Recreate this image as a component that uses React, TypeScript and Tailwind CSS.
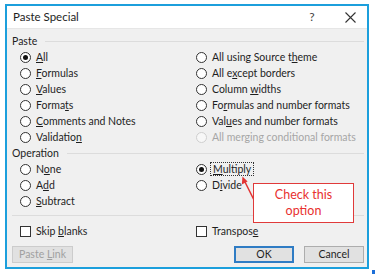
import type { ReactNode } from 'react'

const U = ({ children }: { children: ReactNode }) => <span className="underline underline-offset-[1px]">{children}</span>

const font = { fontFamily: 'Lato, "Noto Sans", sans-serif' }

function Radio({ checked, disabled }: { checked?: boolean; disabled?: boolean }) {
  return (
    <span
      className={
        disabled
          ? 'w-[11px] h-[11px] rounded-full border border-[#cfcfcf] bg-[#f7f7f7] flex items-center justify-center shrink-0'
          : 'w-[11px] h-[11px] rounded-full border border-[#333] bg-white flex items-center justify-center shrink-0'
      }
    >
      {checked && <span className="w-[5px] h-[5px] rounded-full bg-[#111]" />}
    </span>
  )
}

function Option({ label, checked, disabled }: { label: ReactNode; checked?: boolean; disabled?: boolean }) {
  return (
    <div className="h-[16px] flex items-center gap-[5px] pl-[8px]">
      <Radio checked={checked} disabled={disabled} />
      <span className={disabled ? 'text-[#a6a6a6]' : 'text-[#1e1e1e]'}>{label}</span>
    </div>
  )
}

function Check({ label }: { label: ReactNode }) {
  return (
    <div className="h-[16px] flex items-center gap-[5px] pl-[8px]">
      <span className="w-[11px] h-[11px] border border-[#333] bg-white shrink-0" />
      <span className="text-[#1e1e1e]">{label}</span>
    </div>
  )
}

function Group({ children }: { children: ReactNode }) {
  return (
    <div className="h-[16px] flex items-center gap-[8px]">
      <span className="text-[#1e1e1e]">{children}</span>
      <span className="flex-1 h-px bg-[#dcdcdc]" />
    </div>
  )
}

export default function App() {
  return (
    <div className="relative w-[375px] h-[275px] bg-white overflow-hidden" style={font}>
      <div className="ml-[5px] mt-[4px] w-[364px] h-[265px] border-2 border-[#1c9fdc] flex flex-col text-[10.5px] leading-none">
        <div className="h-[22px] bg-white flex items-center pl-[6px] shrink-0">
          <span className="text-[11.5px] text-[#1e1e1e] flex-1">Paste Special</span>
          <span className="text-[12px] text-[#444] w-[10px] text-center">?</span>
          <span className="ml-[26px] mr-[10px] w-[14px] h-[14px] flex items-center justify-center">
            <svg width="11" height="11" viewBox="0 0 11 11" stroke="#333" strokeWidth="1.1">
              <path d="M0.5 0.5 L10.5 10.5 M10.5 0.5 L0.5 10.5" />
            </svg>
          </span>
        </div>
        <div className="flex-1 bg-[#f0f0f0] border-t border-[#e6e6e6] pl-[5px] pr-[3px] pt-[4px]">
          <Group>Paste</Group>
          <div className="grid grid-cols-2">
            <Option checked label={<><U>A</U>ll</>} />
            <Option label={<>All using Source t<U>h</U>eme</>} />
            <Option label={<><U>F</U>ormulas</>} />
            <Option label={<>All e<U>x</U>cept borders</>} />
            <Option label={<><U>V</U>alues</>} />
            <Option label={<>Column <U>w</U>idths</>} />
            <Option label={<>Forma<U>t</U>s</>} />
            <Option label={<>Fo<U>r</U>mulas and number formats</>} />
            <Option label={<><U>C</U>omments and Notes</>} />
            <Option label={<>Val<U>u</U>es and number formats</>} />
            <Option label={<>Validatio<U>n</U></>} />
            <Option disabled label="All merging conditional formats" />
          </div>
          <Group>Operation</Group>
          <div className="grid grid-cols-2">
            <Option label={<>N<U>o</U>ne</>} />
            <div className="h-[16px] flex items-center gap-[5px] pl-[8px]">
              <Radio checked />
              <span className="text-[#1e1e1e] outline outline-1 outline-dotted outline-[#333] outline-offset-[1px] px-[1px]">
                <U>M</U>ultiply
              </span>
            </div>
            <Option label={<>A<U>d</U>d</>} />
            <Option label={<>D<U>i</U>vide</>} />
            <Option label={<><U>S</U>ubtract</>} />
            <div />
          </div>
          <div className="mt-[6px] h-px bg-[#dcdcdc]" />
          <div className="mt-[7px] grid grid-cols-2">
            <Check label={<>Skip <U>b</U>lanks</>} />
            <Check label={<>Transpos<U>e</U></>} />
          </div>
          <div className="mt-[7px] flex items-center">
            <div className="w-[61px] h-[17px] border border-[#cccccc] bg-[#e1e1e1] text-[#a0a0a0] flex items-center justify-center">
              <span>
                Paste <U>L</U>ink
              </span>
            </div>
            <div className="ml-auto w-[60px] h-[17px] border-2 border-[#2f7cc4] bg-[#e1e1e1] text-[#1e1e1e] flex items-center justify-center">
              OK
            </div>
            <div className="ml-[10px] w-[60px] h-[17px] border border-[#adadad] bg-[#e1e1e1] text-[#1e1e1e] flex items-center justify-center">
              Cancel
            </div>
          </div>
        </div>
      </div>

      <svg className="absolute left-0 top-0" width="375" height="275" viewBox="0 0 375 275">
        <path d="M256 204 L244 180" stroke="#e23434" strokeWidth="1.6" fill="none" />
        <path d="M242.5 176.5 L241.8 184.5 L247.6 181.6 Z" fill="#e23434" />
      </svg>
      <div className="absolute left-[253px] top-[183px] w-[101px] h-[40px] border border-[#e03a3a] bg-white flex flex-col items-center justify-center text-[#e8302f] text-[12.5px] leading-[16px]">
        <span>Check this</span>
        <span>option</span>
      </div>
      <div className="absolute left-[372px] top-[270px] w-[3px] h-[4px] bg-[#1c6fd8]" />
    </div>
  )
}
